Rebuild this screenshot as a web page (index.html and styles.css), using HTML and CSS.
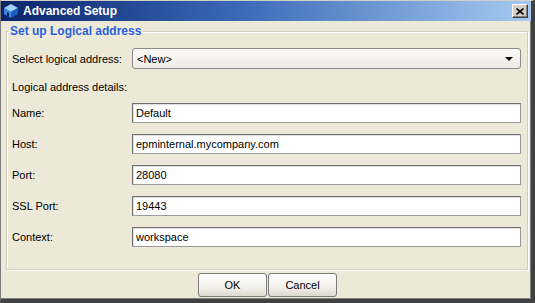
FILE: index.html
```html
<!DOCTYPE html>
<html lang="en">
<head>
  <meta charset="UTF-8" />
  <title>Advanced Setup</title>
  <link rel="stylesheet" href="styles.css">
</head>
<body>
  <div class="dialog">
    <div class="titlebar">
      <svg class="app-icon" width="16" height="16" viewBox="0 0 16 16">
        <polygon points="1,5 8,1 15,5 8,9" fill="#9fd0ff"/>
        <polygon points="1,5 8,9 8,15 1,11" fill="#3f86e0"/>
        <polygon points="8,9 15,5 15,11 8,15" fill="#1c5cc0"/>
        <polygon points="4,9 6,10 6,14 4,13" fill="#0a246a"/>
      </svg>
      <span class="title">Advanced Setup</span>
      <button class="close-btn">
        <svg width="8" height="7" viewBox="0 0 8 7">
          <path d="M0.5 0.5 L7.5 6.5 M7.5 0.5 L0.5 6.5" stroke="#000" stroke-width="1.6"/>
        </svg>
      </button>
    </div>

    <div class="content">
      <fieldset class="group">
        <legend>Set up Logical address</legend>

        <div class="row first">
          <label>Select logical address:</label>
          <div class="select">
            <span>&lt;New&gt;</span>
            <span class="arrow"></span>
          </div>
        </div>

        <div class="row details">
          <label>Logical address details:</label>
        </div>

        <div class="row">
          <label>Name:</label>
          <input type="text" value="Default">
        </div>
        <div class="row">
          <label>Host:</label>
          <input type="text" value="epminternal.mycompany.com">
        </div>
        <div class="row">
          <label>Port:</label>
          <input type="text" value="28080">
        </div>
        <div class="row">
          <label>SSL Port:</label>
          <input type="text" value="19443">
        </div>
        <div class="row">
          <label>Context:</label>
          <input type="text" value="workspace">
        </div>
      </fieldset>

      <div class="buttons">
        <button class="btn">OK</button>
        <button class="btn">Cancel</button>
      </div>
    </div>
  </div>
</body>
</html>
```

FILE: styles.css
```css
body {
  margin: 0;
  font-family: 'Liberation Sans', Arial, sans-serif;
  font-size: 11px;
  color: #000;
  background: #ece9d8;
}
.dialog {
  width: 535px;
  height: 303px;
  box-sizing: border-box;
  display: flex;
  flex-direction: column;
  border-top: 1px solid #d4d0c8;
  border-left: 1px solid #7a7a7a;
  border-right: 4px solid #404040;
  border-bottom: 4px solid #404040;
  box-shadow: inset -1px -1px 0 #808080;
  background: #ece9d8;
}
.titlebar {
  height: 20px;
  flex: none;
  display: flex;
  align-items: center;
  padding: 0 3px 0 2px;
  background: linear-gradient(to right, #0a246a 0%, #3a6ab8 45%, #a6caf0 100%);
}
.app-icon {
  flex: none;
}
.title {
  margin-left: 4px;
  color: #fff;
  font-weight: bold;
  font-size: 12px;
  flex: 1;
}
.close-btn {
  width: 16px;
  height: 14px;
  padding: 0;
  display: flex;
  align-items: center;
  justify-content: center;
  background: #d4d0c8;
  border: 1px solid;
  border-color: #fff #404040 #404040 #fff;
  box-shadow: inset -1px -1px 0 #808080;
}
.content {
  flex: 1;
  display: flex;
  flex-direction: column;
  padding: 2px 3px 2px 5px;
}
.group {
  flex: 1;
  margin: 0;
  padding: 0 6px 0 5px;
  border: 1px solid #d0cdbf;
  box-shadow: inset 1px 1px 0 #fff, 1px 1px 0 #fff;
  min-width: 0;
}
.group legend {
  padding: 0 2px;
  margin-left: -4px;
  color: #2a5fd8;
  font-weight: bold;
  font-size: 12px;
  line-height: 16px;
}
.row {
  display: flex;
  align-items: center;
  height: 20px;
  margin-top: 11px;
}
.row.first {
  height: 21px;
  margin-top: 9px;
}
.row.details {
  margin-top: 8px;
}
.row.details + .row {
  margin-top: 6px;
}
.row label {
  width: 120px;
  flex: none;
}
.row input {
  flex: 1;
  height: 20px;
  box-sizing: border-box;
  margin: 0;
  padding: 0 3px;
  font: inherit;
  border: 1px solid #8c8c8c;
  border-color: #6e6e6e #9a9a9a #9a9a9a #6e6e6e;
  box-shadow: inset 1px 1px 0 #e0e0e0;
  background: #fff;
}
.select {
  flex: 1;
  height: 21px;
  box-sizing: border-box;
  display: flex;
  align-items: center;
  justify-content: space-between;
  padding: 0 7px 0 4px;
  border: 1px solid #8a8a8a;
  border-radius: 3px;
  background: linear-gradient(#fbfaf6, #ecebe4);
}
.arrow {
  width: 0;
  height: 0;
  border-left: 4px solid transparent;
  border-right: 4px solid transparent;
  border-top: 4px solid #000;
}
.buttons {
  flex: none;
  display: flex;
  justify-content: center;
  gap: 1px;
  margin-top: 3px;
  padding-left: 1px;
}
.btn {
  width: 69px;
  height: 24px;
  font: inherit;
  color: #000;
  border: 1px solid #7a7a7a;
  border-radius: 3px;
  background: linear-gradient(#fefefe, #f2f1ea 60%, #dcd9cc);
}
```
